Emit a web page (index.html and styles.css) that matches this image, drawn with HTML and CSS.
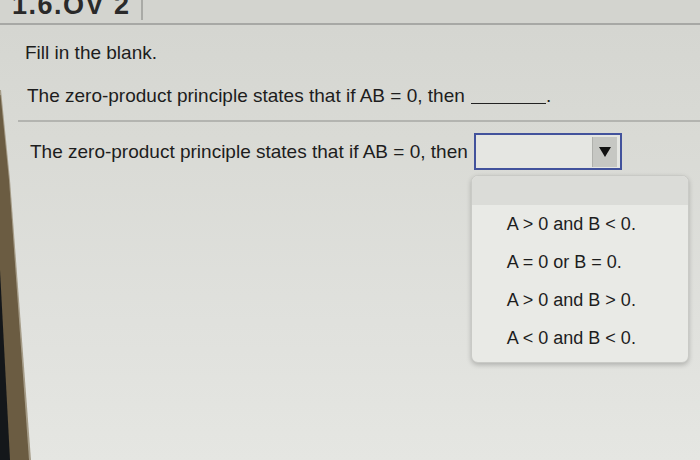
FILE: index.html
```html
<!DOCTYPE html>
<html>
<head>
<meta charset="utf-8">
<link rel="stylesheet" href="styles.css">
</head>
<body>
<div class="screen">
  <div class="topbar">
    <div class="title-cell"><span class="title">1.6.OV 2</span></div>
    <div class="title-rest"></div>
  </div>
  <div class="content">
    <p class="instr">Fill in the blank.</p>
    <p class="question">The zero-product principle states that if AB = 0, then <span class="blank"></span>.</p>
  </div>
  <div class="answer">
    <span class="answer-text">The zero-product principle states that if AB = 0, then</span>
    <div class="select-wrap">
      <div class="select"><span class="arrow"><svg width="14" height="12" viewBox="0 0 14 12"><polygon points="1,1 13,1 7,11" fill="#111"/></svg></span></div>
      <ul class="menu">
        <li class="menu-head"></li>
        <li>A &gt; 0 and B &lt; 0.</li>
        <li>A = 0 or B = 0.</li>
        <li>A &gt; 0 and B &gt; 0.</li>
        <li>A &lt; 0 and B &lt; 0.</li>
      </ul>
    </div>
  </div>
</div>
<svg class="bezel" width="40" height="460" viewBox="0 0 40 460">
  <polygon points="0,90 1,90 10,180 31,460 0,460" fill="#a59c88"/>
  <polygon points="0,95 0.5,95 9,180 29,460 0,460" fill="#6b5c42"/>
  <polygon points="0,270 10,460 0,460" fill="#14171a"/>
</svg>
</body>
</html>
```
FILE: styles.css
```css
html, body {
  margin: 0;
  padding: 0;
  width: 700px;
  height: 460px;
  overflow: hidden;
}
body {
  font-family: "Liberation Sans", Arial, sans-serif;
  color: #1d1d1d;
  background: linear-gradient(180deg, #d4d5d0 0%, #d9dad5 30%, #e0e1dd 70%, #e5e6e2 100%);
  position: relative;
}
.screen {
  width: 700px;
  height: 460px;
}
.topbar {
  display: flex;
  height: 23px;
  border-bottom: 2px solid #a7a8a5;
  background: #d3d4cf;
  overflow: hidden;
}
.title-cell {
  width: 141px;
  border-right: 2px solid #a9aaa6;
  height: 20px;
  overflow: hidden;
}
.title {
  display: block;
  font-size: 27px;
  font-weight: bold;
  line-height: 27px;
  margin-top: -8px;
  padding-left: 12px;
  color: #2a2a2a;
  letter-spacing: 1.5px;
}
.content {
  padding: 17px 0 0 7px;
  border-bottom: 2px solid #b3b4b0;
  margin-left: 18px;
}
.instr {
  margin: 0;
  font-size: 19px;
  line-height: 22px;
}
.question {
  margin: 21px 0 0 2px;
  font-size: 19px;
  line-height: 22px;
  padding-bottom: 13px;
}
.blank {
  display: inline-block;
  width: 75px;
  border-bottom: 1.5px solid #222;
  margin-left: 1px;
  vertical-align: -2px;
}
.answer {
  display: flex;
  align-items: center;
  padding: 11px 0 0 30px;
}
.answer-text {
  font-size: 19px;
  letter-spacing: 0;
}
.select-wrap {
  position: relative;
  margin-left: 6px;
}
.select {
  width: 141px;
  height: 33px;
  border: 2px solid #42529c;
  background: #e5e6e2;
  display: flex;
  justify-content: flex-end;
  align-items: center;
  padding-right: 3px;
}
.arrow {
  width: 24px;
  height: 30px;
  background: #c6c7c3;
  border-left: 1px solid #b0b1ad;
  display: flex;
  align-items: center;
  justify-content: center;
}
.menu {
  position: absolute;
  left: -3px;
  top: 42px;
  width: 216px;
  height: 186px;
  margin: 0;
  padding: 0;
  list-style: none;
  background: #e9eae6;
  border: 1px solid #c9cac6;
  border-radius: 7px;
  box-shadow: 0 2px 5px rgba(0,0,0,0.22);
  overflow: hidden;
  font-size: 18px;
}
.menu li {
  height: 38px;
  line-height: 38px;
  padding-left: 35px;
}
.menu li.menu-head {
  height: 29px;
  background: #dbdcd8;
}
.bezel {
  position: absolute;
  left: 0;
  top: 0;
}
```
